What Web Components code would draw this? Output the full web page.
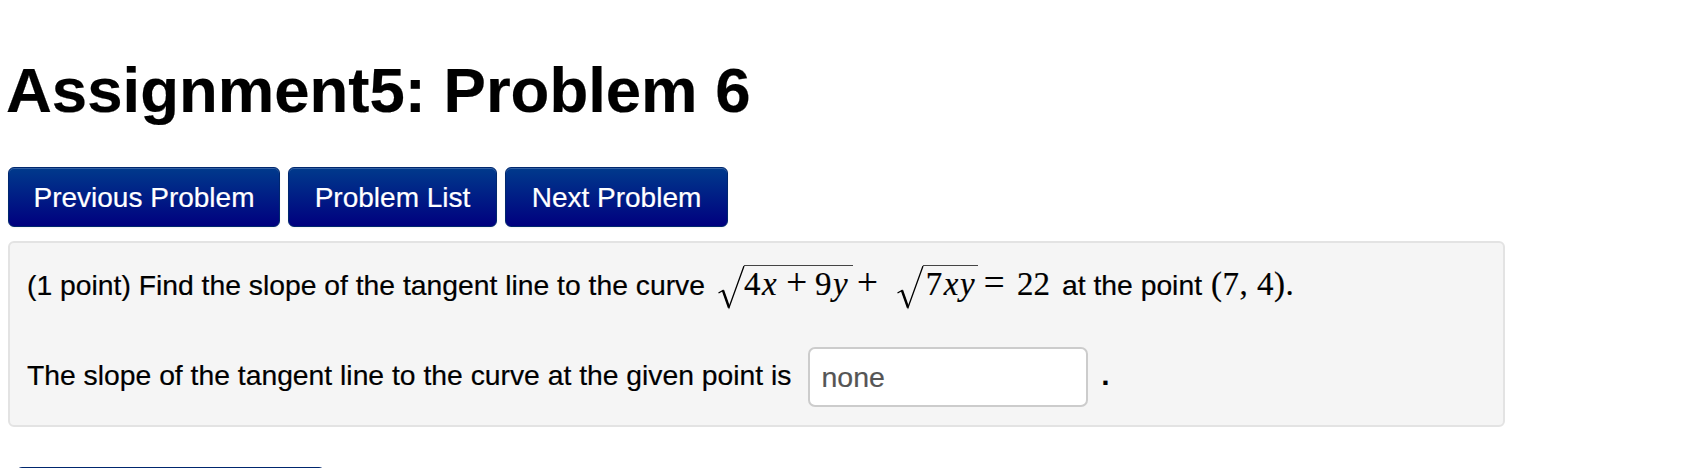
<!DOCTYPE html>
<html lang="en">
<head>
<meta charset="utf-8">
<title>Assignment5: Problem 6</title>
<style>
    html, body { margin: 0; height: 468px; overflow: hidden; background: #fff; }
    body { font-family: "Liberation Sans", Arial, sans-serif; color: #000; -webkit-text-stroke: 0.2px; }
    .serif { font-family: "Liberation Serif", "Times New Roman", serif; font-size: 33px; line-height: 0; }
    .op { font-size: 37px; letter-spacing: 0; line-height: 0; }
</style>
</head>
<body>
<problem-page>
    <span slot="title">Assignment5: Problem 6</span>
    <nav-button slot="nav" style="width:272px">Previous Problem</nav-button>
    <nav-button slot="nav" style="width:209px">Problem List</nav-button>
    <nav-button slot="nav" style="width:223px">Next Problem</nav-button>
    <problem-panel>
        <span slot="question">(1 point) Find the slope of the tangent line to the curve</span>
        <math-sqrt slot="math" style="--w:109px;--inset:0px;margin-left:13px">4<i>x</i><span class="op" style="margin:0 8px 0 8px">+</span>9<i>y</i></math-sqrt>
        <span slot="math" class="serif op" style="margin:0 19px 0 4px">+</span>
        <math-sqrt slot="math" style="--w:55px;--inset:3px">7<i>xy</i></math-sqrt>
        <span slot="math" class="serif" style="margin-left:6px;word-spacing:4px"><span class="op">=</span> 22</span>
        <span slot="math" style="margin-left:12px">at the point</span>
        <span slot="math" class="serif" style="margin-left:9px;letter-spacing:0.5px">(7, 4).</span>
        <span slot="answer-label">The slope of the tangent line to the curve at the given point is</span>
        <answer-box slot="answer">none</answer-box>
    </problem-panel>
    <nav-button slot="footer" style="width:309px;margin-left:8px">&nbsp;</nav-button>
</problem-page>

<script>
class ProblemPage extends HTMLElement {
    constructor() {
        super();
        this.attachShadow({ mode: 'open' });
    }

    connectedCallback() {
        this.shadowRoot.innerHTML = `
            <style>
                :host {
                    display: block;
                    box-sizing: border-box;
                    height: 468px;
                    overflow: hidden;
                    padding: 0 8px;
                }
                h1 {
                    margin: 0 0 0 -2px;
                    padding-top: 53px;
                    font-size: 63.5px;
                    line-height: 74px;
                    font-weight: bold;
                }
                nav { display: flex; gap: 8px; margin-top: 40px; }
                .footer { display: block; margin-top: 40px; }
            </style>
            <h1><slot name="title"></slot></h1>
            <nav><slot name="nav"></slot></nav>
            <slot></slot>
            <div class="footer"><slot name="footer"></slot></div>
        `;
    }
}

class NavButton extends HTMLElement {
    constructor() {
        super();
        this.attachShadow({ mode: 'open' });
    }

    connectedCallback() {
        this.shadowRoot.innerHTML = `
            <style>
                :host {
                    display: flex;
                    box-sizing: border-box;
                    height: 60px;
                    align-items: center;
                    justify-content: center;
                    border: 1px solid #00276e;
                    border-radius: 6px;
                    background: linear-gradient(#003a8c, #00007f);
                    box-shadow: inset 0 1px 0 rgba(255,255,255,0.2), 0 1px 2px rgba(0,0,0,0.05);
                    color: #fff;
                    font-size: 28px;
                    cursor: pointer;
                    padding-top: 2px;
                }
            </style>
            <slot></slot>
        `;
    }
}

class ProblemPanel extends HTMLElement {
    constructor() {
        super();
        this.attachShadow({ mode: 'open' });
    }

    connectedCallback() {
        this.shadowRoot.innerHTML = `
            <style>
                :host {
                    display: block;
                    box-sizing: border-box;
                    width: 1497px;
                    height: 186px;
                    margin-top: 14px;
                    padding: 23px 17px 0;
                    background: #f5f5f5;
                    border: 2px solid #e3e3e3;
                    border-radius: 6px;
                    font-size: 28.3px;
                }
                .row { display: flex; white-space: nowrap; }
                .q { height: 81px; align-items: baseline; }
                .a { align-items: flex-start; }
                .label { margin-top: 12px; }
                .dot { margin: 12px 0 0 14px; font-weight: bold; }
            </style>
            <div class="row q"><slot name="question"></slot><slot name="math"></slot></div>
            <div class="row a">
                <div class="label"><slot name="answer-label"></slot></div>
                <slot name="answer"></slot>
                <span class="dot">.</span>
            </div>
        `;
    }
}

class MathSqrt extends HTMLElement {
    constructor() {
        super();
        this.attachShadow({ mode: 'open' });
    }

    connectedCallback() {
        this.shadowRoot.innerHTML = `
            <style>
                :host {
                    display: inline-flex;
                    position: relative;
                    align-items: baseline;
                    padding-left: 26px;
                    font-family: "Liberation Serif", "Times New Roman", serif;
                    font-size: 33px;
                    letter-spacing: 1.5px;
                    line-height: 36px;
                }
                svg { position: absolute; left: 0; top: 0; width: 26px; height: 42px; overflow: visible; }
                .body {
                    display: block;
                    box-sizing: border-box;
                    width: var(--w);
                    padding-left: var(--inset);
                    white-space: nowrap;
                    box-shadow: 0 -1px 0 #444;
                }
                ::slotted(.op) { font-size: 37px; letter-spacing: 0; line-height: 0; }
            </style>
            <svg viewBox="0 0 26 42" aria-hidden="true">
                <path d="M0.5 27 L5 24.5 L11 41.5 L26 0" fill="none" stroke="#000" stroke-width="1.3"/>
                <path d="M5 24.5 L11 41.5" fill="none" stroke="#000" stroke-width="2.4"/>
            </svg>
            <span class="body"><slot></slot></span>
        `;
    }
}

class AnswerBox extends HTMLElement {
    constructor() {
        super();
        this.attachShadow({ mode: 'open' });
    }

    connectedCallback() {
        this.shadowRoot.innerHTML = `
            <style>
                :host {
                    display: block;
                    box-sizing: border-box;
                    width: 280px;
                    height: 60px;
                    margin-left: 16px;
                    padding: 12px 12px 0;
                    background: #fff;
                    border: 2px solid #ccc;
                    border-radius: 7px;
                    color: #555;
                    font-size: 28.5px;
                    line-height: 32px;
                }
            </style>
            <slot></slot>
        `;
    }
}

customElements.define('problem-page', ProblemPage);
customElements.define('nav-button', NavButton);
customElements.define('problem-panel', ProblemPanel);
customElements.define('math-sqrt', MathSqrt);
customElements.define('answer-box', AnswerBox);
</script>
</body>
</html>
